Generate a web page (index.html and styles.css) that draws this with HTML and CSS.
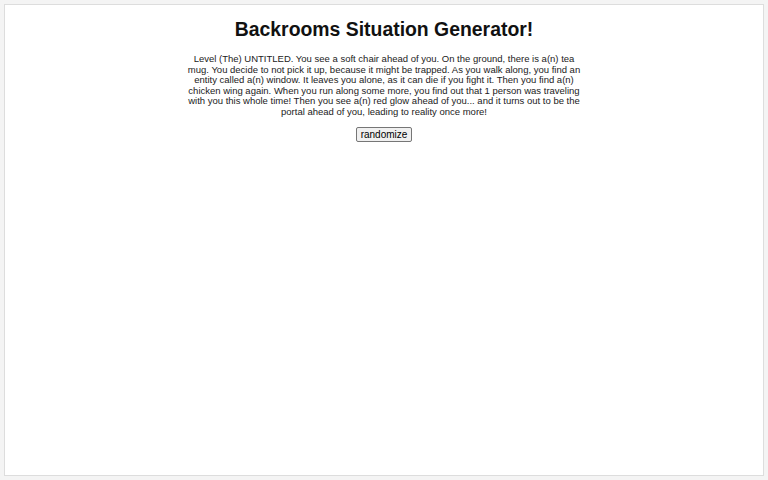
FILE: index.html
```html
<!DOCTYPE html>
<html lang="en">
<head>
    <meta charset="UTF-8">
    <meta name="viewport" content="width=device-width, initial-scale=1.0">
    <title>Backrooms Situation Generator</title>
    <link rel="stylesheet" href="styles.css">
</head>
<body>
    <div class="container">
        <h1>Backrooms Situation Generator!</h1>
        <p id="situation">Level (The) UNTITLED. You see a soft chair ahead of you. On the ground, there is a(n) tea mug. You decide to not pick it up, because it might be trapped. As you walk along, you find an entity called a(n) window. It leaves you alone, as it can die if you fight it. Then you find a(n) chicken wing again. When you run along some more, you find out that 1 person was traveling with you this whole time! Then you see a(n) red glow ahead of you... and it turns out to be the portal ahead of you, leading to reality once more!</p>
        <button id="randomize">randomize</button>
    </div>
</body>
</html>
```

FILE: styles.css
```css
body {
    font-family: "Liberation Sans", Arial, sans-serif;
    background-color: #f4f4f4;
    margin: 0;
    padding: 4px;
}

.container {
    height: 472px;
    box-sizing: border-box;
    background: #fff;
    border: 1px solid #ddd;
    text-align: center;
}

h1 {
    font-size: 19.4px;
    margin: 0;
    padding-top: 13px;
    color: #111;
}

p {
    max-width: 400px;
    margin: 13px auto 6px;
    font-size: 9.5px;
    line-height: 10.6px;
    color: #222;
}

button {
    font-family: "Liberation Sans", Arial, sans-serif;
    font-size: 10px;
    padding: 1px 4px;
    background: #f0f0f0;
    border: 1px solid #767676;
    border-radius: 2px;
    color: #000;
}
```
